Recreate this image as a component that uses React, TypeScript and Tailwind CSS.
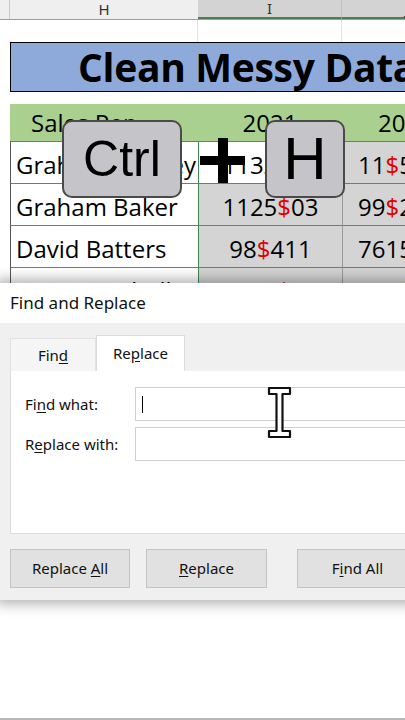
import React from "react";

const sheetFont = { fontFamily: '"Open Sans", "Noto Sans", sans-serif' };
const uiFont = { fontFamily: '"Noto Sans", "Open Sans", sans-serif' };

type Row = { name: string; a: [string, string, string]; b: [string, string, string] };

const rows: Row[] = [
    { name: "Graham Tunney", a: ["1132", "$", "45"], b: ["11", "$", "542"] },
    { name: "Graham Baker", a: ["1125", "$", "03"], b: ["99", "$", "214"] },
    { name: "David Batters", a: ["98", "$", "411"], b: ["7615", "$", "3"] },
    { name: "Jenny Mitchell", a: ["1023", "$", "47"], b: ["882", "$", "19"] },
];

function Money({ parts }: { parts: [string, string, string] }) {
    return (
        <span>
            {parts[0]}
            <span className="text-[#e00000]">{parts[1]}</span>
            {parts[2]}
        </span>
    );
}

function Key({ label, className }: { label: string; className: string }) {
    return (
        <div
            className={`absolute flex items-center justify-center rounded-[10px] border-2 border-[#4a4a4a] bg-[#c5c5c9] leading-none text-black ${className}`}
            style={{ fontFamily: '"Liberation Sans", Arial, sans-serif' }}
        >
            {label}
        </div>
    );
}

function IBeam() {
    return (
        <svg className="absolute left-[267px] top-[386px]" width="25" height="53" viewBox="0 0 25 53">
            <path
                d="M2 2 H23 V8 H15.5 V45 H23 V51 H2 V45 H9.5 V8 H2 Z"
                fill="#fff"
                stroke="#111"
                strokeWidth="2.2"
                strokeLinejoin="round"
            />
        </svg>
    );
}

function Spreadsheet() {
    return (
        <div className="w-[560px]" style={sheetFont}>
            {/* column headers */}
            <div className="flex h-[20px] border-b border-[#9e9e9e]">
                <div className="w-[10px] bg-[#efefef] border-r border-[#c8c8c8]" />
                <div className="w-[188px] bg-[#efefef] flex items-center justify-center text-[15px] text-[#333]" style={uiFont}>H</div>
                <div className="w-[144px] bg-[#d3d3d3] border-b-2 border-[#4d7d57] border-r border-r-[#bdbdbd] flex items-center justify-center text-[15px] text-[#333]" style={uiFont}>I</div>
                <div className="w-[130px] bg-[#d3d3d3] border-b-2 border-[#4d7d57] flex items-center justify-center text-[15px] text-[#333]" style={uiFont}>J</div>
            </div>
            {/* blank row */}
            <div className="flex h-[22px]">
                <div className="w-[198px] border-r border-[#e2e2e2]" />
                <div className="w-[144px] border-r border-[#e2e2e2]" />
            </div>
            {/* title */}
            <div className="flex h-[50px]">
                <div className="w-[10px]" />
                <div className="flex-1 bg-[#8eaadb] border border-black flex items-center pl-[67px] text-[39px] font-bold text-black tracking-[-0.3px] whitespace-nowrap">
                    Clean Messy Data
                </div>
            </div>
            <div className="h-[12px]" />
            {/* green header */}
            <div className="flex h-[37px] text-[24px] text-black">
                <div className="w-[10px]" />
                <div className="w-[188px] bg-[#a9d08e] flex items-center pl-[21px]">Sales Rep</div>
                <div className="w-[144px] bg-[#a9d08e] flex items-center justify-center">2021</div>
                <div className="flex-1 bg-[#a9d08e] flex items-center pl-[36px]">2022</div>
            </div>
            {/* data */}
            {rows.map((r, i) => (
                <div key={r.name} className="flex h-[42px] text-[24px] text-black">
                    <div className="w-[10px]" />
                    <div className="w-[188px] border-l border-[#555] border-t border-t-[#777] flex items-center pt-[4px] pl-[5px] whitespace-nowrap">{r.name}</div>
                    <div
                        className={`w-[144px] border-l border-[#3f8a55] border-t border-t-[#777] flex items-center justify-center pt-[4px] ${i === 0 ? "bg-white" : "bg-[#d4d4d4]"}`}
                    >
                        <Money parts={r.a} />
                    </div>
                    <div className="w-[130px] bg-[#d4d4d4] border-l border-[#9a9a9a] border-t border-t-[#777] flex items-center pt-[4px] pl-[15px]">
                        <Money parts={r.b} />
                    </div>
                </div>
            ))}
        </div>
    );
}

function Dialog() {
    return (
        <div
            className="absolute left-0 top-[283px] w-[430px] h-[317px] bg-[#f0f0f0] shadow-[0_0_12px_4px_rgba(0,0,0,0.3)] flex flex-col text-[#111]"
            style={uiFont}
        >
            <div className="h-[40px] bg-white flex items-center pl-[10px] text-[17px]">Find and Replace</div>
            <div className="flex flex-col px-[10px] pt-[12px]">
                {/* tabs */}
                <div className="flex items-end h-[36px]">
                    <div className="w-[86px] h-[33px] bg-[#f5f5f5] border border-b-0 border-[#e2e2e2] flex items-center justify-center text-[15px]">
                        <span>Fin<u className="underline-offset-2">d</u></span>
                    </div>
                    <div className="w-[89px] h-[36px] bg-white border border-b-0 border-[#dcdcdc] flex items-center justify-center text-[15px]">
                        <span>Re<u className="underline-offset-2">p</u>lace</span>
                    </div>
                </div>
                {/* panel */}
                <div className="h-[163px] bg-white border border-[#dcdcdc] border-t-0 flex flex-col gap-[6px] pt-[16px] pl-[14px] text-[15px]">
                    <div className="flex items-center">
                        <div className="w-[110px]">Fi<u className="underline-offset-2">n</u>d what:</div>
                        <div className="flex-1 h-[34px] border border-[#cfcfcf] bg-white flex items-center pl-[6px]">
                            <div className="w-px h-[17px] bg-black" />
                        </div>
                    </div>
                    <div className="flex items-center">
                        <div className="w-[110px]">R<u className="underline-offset-2">e</u>place with:</div>
                        <div className="flex-1 h-[34px] border border-[#cfcfcf] bg-white" />
                    </div>
                </div>
                {/* buttons */}
                <div className="flex mt-[15px] text-[15px]">
                    <div className="w-[120px] h-[39px] bg-[#e1e1e1] border border-[#c4c4c4] flex items-center justify-center">
                        <span>Replace <u className="underline-offset-2">A</u>ll</span>
                    </div>
                    <div className="w-[121px] h-[39px] ml-[16px] bg-[#e1e1e1] border border-[#c4c4c4] flex items-center justify-center">
                        <span><u className="underline-offset-2">R</u>eplace</span>
                    </div>
                    <div className="w-[121px] h-[39px] ml-[30px] bg-[#e1e1e1] border border-[#c4c4c4] flex items-center justify-center">
                        <span>F<u className="underline-offset-2">i</u>nd All</span>
                    </div>
                </div>
            </div>
        </div>
    );
}

export default function App() {
    return (
        <div className="relative w-[405px] h-[720px] overflow-hidden bg-white">
            <Spreadsheet />
            <Dialog />
            <div className="absolute left-0 bottom-0 w-full h-[2px] bg-[#b8b8b8]" />

            {/* shortcut overlay */}
            <Key label="Ctrl" className="left-[62px] top-[120px] w-[120px] h-[78px] text-[50px]" />
            <div className="absolute left-[200px] top-[156px] w-[45px] h-[9px] bg-black" />
            <div className="absolute left-[218px] top-[138px] w-[10px] h-[45px] bg-black" />
            <Key label="H" className="left-[265px] top-[120px] w-[80px] h-[78px] text-[60px]" />

            <IBeam />
        </div>
    );
}
